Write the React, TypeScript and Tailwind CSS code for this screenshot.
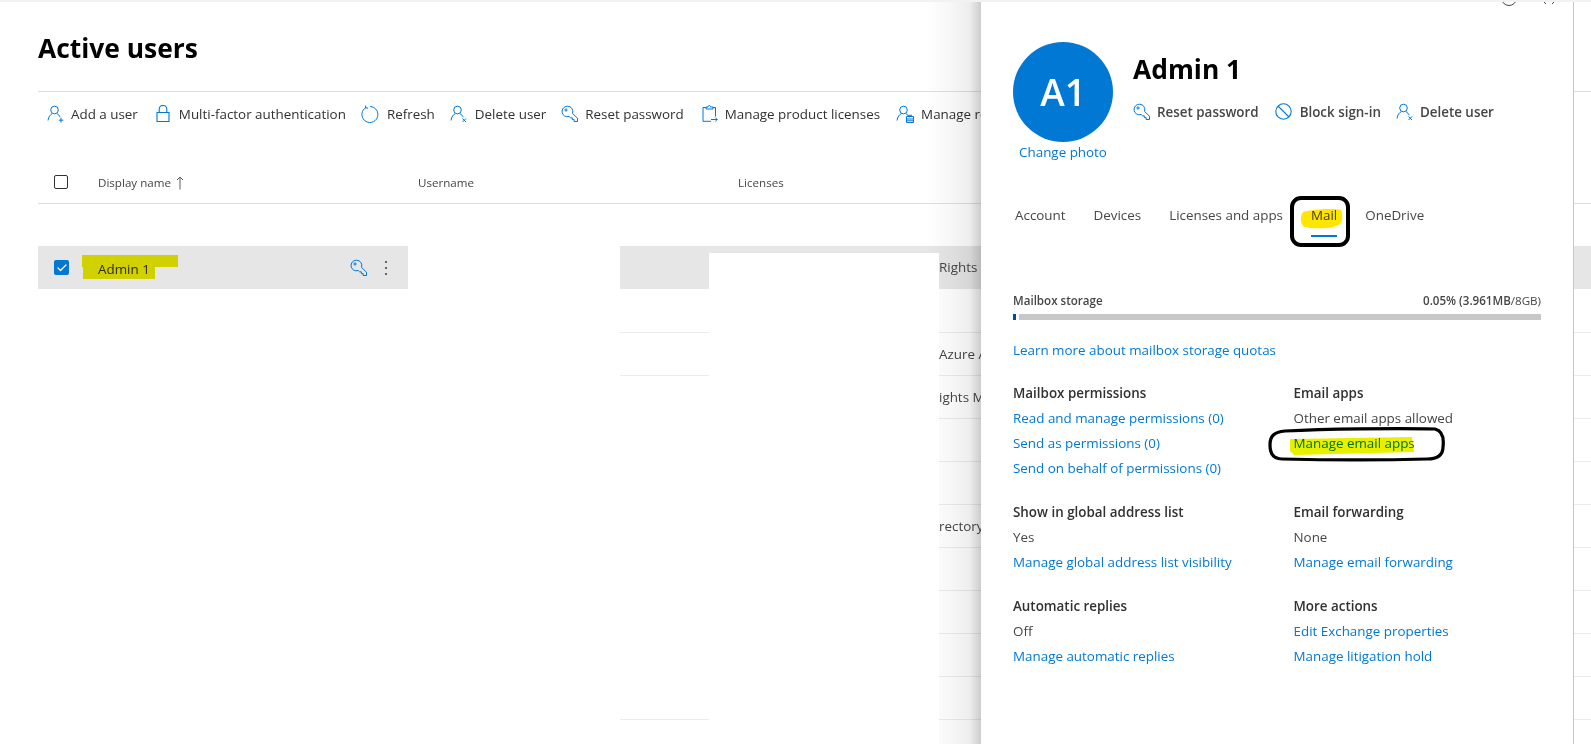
import React from 'react';
import { Check } from 'lucide-react';

const blue = '#0078d4';

function PersonIcon({ badge }: { badge?: 'plus' | 'x' | 'case' }) {
  return (
    <svg width="18" height="18" viewBox="0 0 18 18" fill="none" stroke={blue} strokeWidth="1" className="shrink-0">
      <circle cx="7.5" cy="5" r="3.8" />
      <path d="M1 15.5c.4-3.6 2.4-6 4.2-6.8M9.8 8.7c1.6.7 2.8 2 3.4 3.6" />
      {badge === 'plus' && <path d="M14 13v4.5M11.8 15.2h4.5" />}
      {badge === 'x' && <path d="M12.5 13.5l3.5 3.5M16 13.5l-3.5 3.5" />}
      {badge === 'case' && <path d="M10.5 11.5h7v6h-7zM10.5 14h7M10.5 15.8h7M12.5 11.5v-1.2h3v1.2" />}
    </svg>
  );
}

function KeyIcon() {
  return (
    <svg width="18" height="18" viewBox="0 0 18 18" fill="none" stroke={blue} strokeWidth="1" className="shrink-0">
      <path d="M6.5 1.2a5.3 5.3 0 1 0 1.6 10.3l1.4 1.3h1.8v1.8h1.8v1.9h3.4v-3.3l-5-4.8A5.3 5.3 0 0 0 6.5 1.2z" />
      <circle cx="5" cy="5" r="1.1" />
    </svg>
  );
}

function LockIcon() {
  return (
    <svg width="14" height="17" viewBox="0 0 14 17" fill="none" stroke={blue} strokeWidth="1.1" className="shrink-0">
      <path d="M1 7.5h12v9H1zM3.2 7.5V4.2a3.8 3.8 0 0 1 7.6 0v3.3" />
    </svg>
  );
}

function RefreshIcon() {
  return (
    <svg width="18" height="18" viewBox="0 0 18 18" fill="none" stroke={blue} strokeWidth="1" className="shrink-0">
      <path d="M5.2 2.4a8 8 0 1 0 4-.9" />
      <path d="M4.6 .6v2.4h2.6" />
    </svg>
  );
}

function ClipboardIcon() {
  return (
    <svg width="16" height="17" viewBox="0 0 16 17" fill="none" stroke={blue} strokeWidth="1" className="shrink-0">
      <path d="M4 2.5H1v13.8h8M11 2.5h2.5v9M4 4V2h2c0-2 2.5-2 2.5 0H11v2z" />
      <path d="M9 14.5h6.3M13.2 12.5l2 2-2 2" />
    </svg>
  );
}

function BlockIcon() {
  return (
    <svg width="17" height="17" viewBox="0 0 17 17" fill="none" stroke={blue} strokeWidth="1.1" className="shrink-0">
      <circle cx="8.5" cy="8.5" r="7.7" />
      <path d="M3 3l11 11" />
    </svg>
  );
}

function ToolItem({ icon, label, className }: { icon: React.ReactNode; label: string; className?: string }) {
  return (
    <div className={`flex items-center shrink-0 whitespace-nowrap ${className || ''}`}>
      {icon}
      <span>{label}</span>
    </div>
  );
}

function Link({ children }: { children: React.ReactNode }) {
  return <a className="block leading-[20px] text-[#0078d4] whitespace-nowrap">{children}</a>;
}

function Group({ title, value, links }: { title: string; value?: string; links: string[] }) {
  return (
    <div className="flex flex-col gap-[5px]">
      <div className="leading-[20px] font-semibold text-[#323130]">{title}</div>
      {value && <div className="leading-[20px] text-[#484644]">{value}</div>}
      {links.map((l) => (
        <Link key={l}>{l}</Link>
      ))}
    </div>
  );
}

// row text is whatever stays visible right of the redaction
const rows: { text?: string; line?: boolean; h?: string }[] = [
  { line: true },
  { text: 'Azure A', line: true },
  { text: 'ights Mana' },
  {},
  {},
  { text: 'rectory P' },
  {},
  {},
  {},
  { line: true },
  { line: true },
];

export default function App() {
  return (
    <div className="relative w-[1591px] h-[744px] overflow-hidden bg-white text-[13.4px] text-[#323130] font-['Open_Sans','Liberation_Sans',sans-serif]">
      <div className="h-[2px] bg-[#f3f2f1]" />

      {/* Active users page */}
      <div className="pl-[38px]">
        <h1 className="pt-[27px] pb-[24px] text-[26.4px] leading-[38px] font-bold text-black">Active users</h1>
        <div className="border-t border-[#e1dfdd] h-[45px] flex items-center pl-[9px]">
          <ToolItem icon={<PersonIcon badge="plus" />} label="Add a user" className="gap-[6px] mr-[18px]" />
          <ToolItem icon={<LockIcon />} label="Multi-factor authentication" className="gap-[9px] mr-[15px]" />
          <ToolItem icon={<RefreshIcon />} label="Refresh" className="gap-[8px] mr-[15px]" />
          <ToolItem icon={<PersonIcon badge="x" />} label="Delete user" className="gap-[7px] mr-[15px]" />
          <ToolItem icon={<KeyIcon />} label="Reset password" className="gap-[6px] mr-[18px]" />
          <ToolItem icon={<ClipboardIcon />} label="Manage product licenses" className="gap-[7px] mr-[16px]" />
          <ToolItem icon={<PersonIcon badge="case" />} label="Manage roles" className="gap-[7px]" />
        </div>

        <div className="h-[68px] pt-[27px] border-b border-[#e1dfdd] flex items-center text-[11.6px] text-[#484644]">
          <div className="w-[14px] h-[14px] ml-[16px] mr-[30px] mb-[3px] border border-[#323130] rounded-[2px]" />
          <div className="w-[320px] flex items-center gap-[5px]">
            Display name
            <svg width="8" height="14" viewBox="0 0 8 14" fill="none" stroke="#605e5c" strokeWidth="1">
              <path d="M4 13.5V1M1 4l3-3 3 3" />
            </svg>
          </div>
          <div className="w-[320px]">Username</div>
          <div>Licenses</div>
        </div>

        <div className="mt-[42px]">
          {/* selected row */}
          <div className="flex h-[43px]">
            <div className="w-[370px] bg-[#e6e6e6] flex items-center pl-[16px] pr-[20px]">
              <div className="w-[15px] h-[15px] rounded-[2px] bg-[#0078d4] flex items-center justify-center">
                <Check size={12} color="white" strokeWidth={2.5} />
              </div>
              <span className="ml-[29px] mt-[3px]">Admin 1</span>
              <div className="ml-auto flex items-center gap-[16px]">
                <KeyIcon />
                <svg width="4" height="16" viewBox="0 0 4 16" fill="#484644">
                  <circle cx="2" cy="2" r="1.1" />
                  <circle cx="2" cy="8" r="1.1" />
                  <circle cx="2" cy="14" r="1.1" />
                </svg>
              </div>
            </div>
            <div className="w-[212px]" />
            <div className="flex-1 bg-[#e6e6e6] flex items-center pl-[319px] whitespace-nowrap overflow-hidden text-[#484644]">
              Rights Mana
            </div>
          </div>

          {rows.map((r, i) => (
            <div key={i} className={`flex ${i === 0 ? 'h-[44px]' : 'h-[43px]'}`}>
              <div className="w-[370px]" />
              <div className="w-[212px]" />
              <div className={`w-[89px] ${r.line ? 'border-b border-[#edebe9]' : ''}`} />
              <div className="w-[230px]" />
              <div className="flex-1 border-b border-[#edebe9] flex items-center whitespace-nowrap overflow-hidden text-[#484644]">
                {r.text}
              </div>
            </div>
          ))}
        </div>
      </div>

      {/* panel shadow over the page */}
      <div className="absolute top-[2px] bottom-0 left-[925px] w-[56px] bg-[linear-gradient(to_right,rgba(0,0,0,0),rgba(0,0,0,0.03)_45%,rgba(0,0,0,0.07)_80%,rgba(0,0,0,0.2))]" />
      {/* white block painted over the screenshot */}
      <div className="absolute top-[253px] bottom-0 left-[709px] w-[230px] bg-white" />

      {/* user panel */}
      <div className="absolute top-[2px] bottom-0 left-[981px] w-[593px] bg-white border-r border-[#c8c6c4] pl-[32px] pr-[32px] pt-[40px]">
        <svg className="absolute top-0 left-[515px]" width="70" height="6" viewBox="0 0 70 6" fill="none" stroke="#484644" strokeWidth="1">
          <circle cx="13" cy="-4" r="7.5" />
          <path d="M47 -1l3 3M59 -1l-3 3" />
        </svg>

        <div className="flex gap-[20px]">
          <div className="w-[100px]">
            <div className="w-[100px] h-[100px] rounded-full bg-[#0078d4] flex items-center justify-center text-white text-[37px] font-semibold">
              A1
            </div>
            <div className="text-center leading-[20px] text-[#0078d4] whitespace-nowrap">Change photo</div>
          </div>
          <div>
            <div className="mt-[8px] text-[26.4px] leading-[38px] font-bold text-black">Admin 1</div>
            <div className="mt-[12px] h-[24px] flex items-center font-semibold text-[#484644]">
              <ToolItem icon={<KeyIcon />} label="Reset password" className="gap-[6px] mr-[16px]" />
              <ToolItem icon={<BlockIcon />} label="Block sign-in" className="gap-[8px] mr-[15px]" />
              <ToolItem icon={<PersonIcon badge="x" />} label="Delete user" className="gap-[6px]" />
            </div>
          </div>
        </div>

        <div className="mt-[43px] pl-[2px] flex gap-[28px] text-[#484644]">
          <div>Account</div>
          <div>Devices</div>
          <div>Licenses and apps</div>
          <div className="flex flex-col">
            <span className="leading-[20px]">Mail</span>
            <div className="mt-[10px] h-[2px] bg-[#0078d4]" />
          </div>
          <div>OneDrive</div>
        </div>

        <div className="mt-[56px] flex justify-between text-[11.6px] leading-[16px] font-semibold text-[#484644]">
          <span>Mailbox storage</span>
          <span>
            0.05% (3.961MB<span className="font-normal">/8GB)</span>
          </span>
        </div>
        <div className="mt-[5px] h-[6px] flex bg-[#c8c8c8]">
          <div className="w-[3px] bg-[#004e8c]" />
          <div className="w-[3px] bg-white" />
        </div>

        <div className="mt-[20px]">
          <Link>Learn more about mailbox storage quotas</Link>
        </div>

        <div className="mt-[23px] grid grid-cols-[280.5px_1fr] gap-y-[24px]">
          <Group title="Mailbox permissions" links={['Read and manage permissions (0)', 'Send as permissions (0)', 'Send on behalf of permissions (0)']} />
          <Group title="Email apps" value="Other email apps allowed" links={['Manage email apps']} />
          <Group title="Show in global address list" value="Yes" links={['Manage global address list visibility']} />
          <Group title="Email forwarding" value="None" links={['Manage email forwarding']} />
          <Group title="Automatic replies" value="Off" links={['Manage automatic replies']} />
          <Group title="More actions" links={['Edit Exchange properties', 'Manage litigation hold']} />
        </div>
      </div>

      {/* marker strokes someone drew on the screenshot */}
      <svg className="absolute inset-0 mix-blend-multiply pointer-events-none" width="1591" height="744" viewBox="0 0 1591 744">
        <path d="M82 255h96v12h-23v12H83v-12h-1z" fill="#e8e800" />
        <path d="M1303 212c10-3 30-4 38-2 2 6 2 12-2 15-8 4-26 4-35 2-4-4-4-11-1-15z" fill="#ffe600" />
        <path d="M1290 439l122-2 2 15-120 3-4-4z" fill="#e8f000" />
      </svg>
      <svg className="absolute inset-0 pointer-events-none" width="1591" height="744" viewBox="0 0 1591 744" fill="none" stroke="black">
        <rect x="1292" y="198" width="56" height="47" rx="9" strokeWidth="4" />
        <path d="M1285 431c40-2 110-3 150-2 8 2 9 10 8 18 0 8-5 12-16 12-40 1-100 1-145 0-9 0-12-6-12-14 0-9 4-13 15-14z" strokeWidth="3.2" />
      </svg>
    </div>
  );
}
